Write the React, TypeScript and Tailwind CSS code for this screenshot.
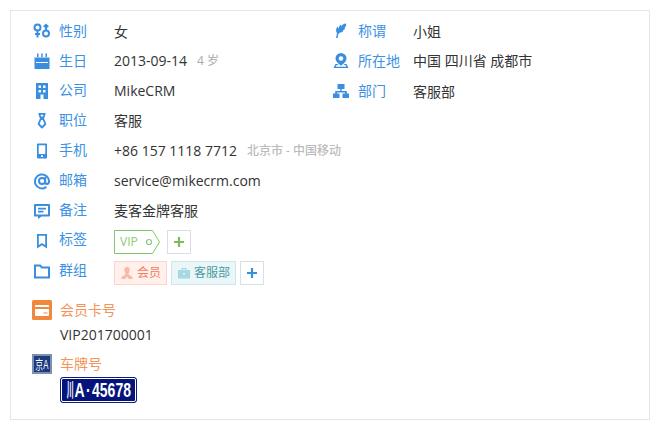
import type { ReactNode } from 'react';

const icons: Record<string, ReactNode> = {
  gender: (
    <>
      <circle cx="4.500" cy="5.500" r="3" fill="none" stroke="currentColor" strokeWidth="2" />
      <path d="M4.500 8v7.500M2 12h5" stroke="currentColor" strokeWidth="2" fill="none" />
      <circle cx="13" cy="11.500" r="3" fill="none" stroke="currentColor" strokeWidth="2" />
      <path d="M13 9V3M10.800 5l2.200-2.200L15.200 5" stroke="currentColor" strokeWidth="2" fill="none" />
    </>
  ),
  cake: (
    <path
      fill="currentColor"
      fillRule="evenodd"
      d="M4 1.500h1.500v3.500H4zM8.200 1.500h1.500v3.500H8.200zM12.500 1.500H14v3.500h-1.500zM1.500 5.500h15V17h-15zM3 10v1h12v-1z"
    />
  ),
  building: (
    <path
      fill="currentColor"
      fillRule="evenodd"
      d="M3 1h12v16H3zM5.500 3.500V6h2.500V3.500zM10 3.500V6h2.500V3.500zM5.500 8v2.500h2.500V8zM10 8v2.500h2.500V8zM7.500 12.500V17h3v-4.500z"
    />
  ),
  tie: (
    <path
      fill="none"
      stroke="currentColor"
      strokeWidth="1.800"
      strokeLinejoin="round"
      d="M6.200 1.800h5.600L10.500 5.500h-3zM7.600 7h2.800l2 5-3.400 3.500L5.600 12z"
    />
  ),
  phone: (
    <path
      fill="currentColor"
      fillRule="evenodd"
      d="M4.800 1.500h8.400A.8.800 0 0 1 14 2.300v13.400a.8.800 0 0 1-.8.800H4.800a.8.800 0 0 1-.8-.8V2.300a.8.800 0 0 1 .8-.8zM5.700 3.300v8.700h6.600V3.300zM8 13.200v1.800h2v-1.800z"
    />
  ),
  at: (
    <path
      fill="none"
      stroke="currentColor"
      strokeWidth="2"
      strokeLinecap="round"
      d="M12.800 15.300a7 7 0 1 1 3.200-6c0 1.700-.8 2.800-2 2.800s-1.800-.9-1.800-2.300V5.800M12.200 9a3.100 3.100 0 1 1-6.200 0 3.100 3.100 0 0 1 6.200 0z"
    />
  ),
  note: (
    <path
      fill="currentColor"
      fillRule="evenodd"
      d="M2 2h14a1 1 0 0 1 1 1v10.500a1 1 0 0 1-1 1H8.500L5 17v-2.500H2a1 1 0 0 1-1-1V3a1 1 0 0 1 1-1zM3 4v8.500h12V4zM5 5.800h8v1.800H5zM5 8.800h5.500v1.800H5z"
    />
  ),
  bookmark: (
    <path
      fill="currentColor"
      fillRule="evenodd"
      d="M4 2h10v14.500l-5-3.200-5 3.200zM5.800 3.800v9.300L9 11l3.200 2.100V3.800z"
    />
  ),
  folder: (
    <path
      fill="currentColor"
      fillRule="evenodd"
      d="M1 2.500h6.500l2 2H17v12H1zM3 4.500v10h12v-8H8.500l-2-2z"
    />
  ),
  feather: (
    <path
      fill="currentColor"
      d="M14 1.500c.6 2.300-.2 3.200-1.200 3.800.6 1.500-.5 2.600-1.700 2.900.1 1.500-1.300 2.300-3.200 2.300l-1.700 1.700-.6 3.800H4l1-4.800C3.500 9 4 5.800 5.700 4.500c.3 1.200.6 1.800 1 2.200-.1-2 1-3.600 2.400-4.300 0 1 .2 1.600.5 2 .2-1.500 2.300-3 4.400-2.900z"
    />
  ),
  pin: (
    <>
      <path
        fill="currentColor"
        fillRule="evenodd"
        d="M9 1a5.500 5.500 0 0 1 5.500 5.500c0 2.700-2.500 5-5.500 7.300-3-2.300-5.500-4.600-5.500-7.300A5.500 5.500 0 0 1 9 1zm0 3.200a2.300 2.300 0 1 0 0 4.600 2.300 2.300 0 0 0 0-4.600z"
      />
      <path fill="currentColor" d="M3.500 12h2l1 1H4.700l-1 1.800h10.600l-1-1.800h-1.800l1-1h2l2 4H1.500z" />
    </>
  ),
  org: (
    <path
      fill="currentColor"
      d="M5.500 2h7v5H9.700v2h5.100v2.500H17V16h-6.500v-4.500h2.600v-1H4.900v1h2.600V16H1v-4.500h2.200V9h5.100V7H5.500z"
    />
  ),
};

function FieldIcon({ name }: { name: string }) {
  return (
    <svg viewBox="0 0 18 18" className="h-[18px] w-[18px] shrink-0 text-[#3a8ee0]">
      {icons[name]}
    </svg>
  );
}

function Field({
  icon,
  label,
  labelClass = 'pb-0.5',
  children,
}: {
  icon: string;
  label: string;
  labelClass?: string;
  children: ReactNode;
}) {
  return (
    <div className="flex h-[30px] items-center">
      <FieldIcon name={icon} />
      <span className={`ml-2 w-[55px] shrink-0 text-[#3b92e3] ${labelClass}`}>{label}</span>
      <div className="flex items-center text-[#333]">{children}</div>
    </div>
  );
}

function AddButton({ color }: { color: string }) {
  return (
    <button className="flex h-6 w-6 items-center justify-center border border-[#d9dfe3] bg-white">
      <svg viewBox="0 0 12 12" className="h-3 w-3">
        <path d="M6 1v10M1 6h10" stroke={color} strokeWidth="2.200" />
      </svg>
    </button>
  );
}

export default function App() {
  return (
    <div className="h-[430px] w-[660px] bg-white p-2.5 font-['Open_Sans','Noto_Sans_CJK_SC',sans-serif] text-sm">
      <div className="h-[410px] border border-[#e6e6e6] pl-[22px] pt-[5px]">
        <div className="grid grid-cols-[299px_1fr]">
          <Field icon="gender" label="性别" labelClass="">
            <span className="pt-0.5">女</span>
          </Field>
          <Field icon="feather" label="称谓" labelClass="">
            <span className="pt-0.5">小姐</span>
          </Field>
          <Field icon="cake" label="生日" labelClass="">
            2013-09-14
            <span className="ml-2.5 text-xs text-[#aaa]">4 岁</span>
          </Field>
          <Field icon="pin" label="所在地" labelClass="">中国 四川省 成都市</Field>
          <Field icon="building" label="公司">MikeCRM</Field>
          <Field icon="org" label="部门" labelClass="">
            <span className="pt-0.5">客服部</span>
          </Field>
        </div>

        <Field icon="tie" label="职位">客服</Field>
        <Field icon="phone" label="手机">
          +86 157 1118 7712
          <span className="ml-2.5 text-xs font-medium text-[#bbb]">北京市 - 中国移动</span>
        </Field>
        <Field icon="at" label="邮箱">service@mikecrm.com</Field>
        <Field icon="note" label="备注">麦客金牌客服</Field>
        <Field icon="bookmark" label="标签" labelClass="pb-1">
          <div className="mt-0.5 flex items-center gap-[7px]">
            <div className="relative h-6 w-[46px]">
              <svg viewBox="0 0 46 24" className="absolute inset-0 h-6 w-[46px]">
                <path d="M.5.500h38l7 11.500-7 11.500H.5z" fill="#fff" stroke="#7dc868" />
                <circle cx="35" cy="12" r="2.500" fill="none" stroke="#8cc97a" strokeWidth="1.200" />
              </svg>
              <span className="absolute left-1.5 top-[3px] text-xs leading-[18px] text-[#8cc97a]">VIP</span>
            </div>
            <AddButton color="#7dbb5c" />
          </div>
        </Field>
        <Field icon="folder" label="群组">
          <div className="mt-1 flex items-center gap-1">
            <span className="flex h-6 items-center gap-[3px] border border-[#fdd5ca] bg-[#fff0ec] pl-[5px] pr-[5px] text-xs text-[#f0805e]">
              <svg viewBox="0 0 14 12" className="h-3 w-3.5">
                <path
                  fill="#fbb8a2"
                  d="M7 0a2.700 2.700 0 0 1 2.700 2.700C9.700 4.500 8.800 6 8.300 6.800c.3 1.200 3.200 2.500 4.200 3.200V12H9L7 9.500 5 12H1.500v-2c1-.7 3.900-2 4.200-3.200C5.200 6 4.300 4.500 4.300 2.700A2.700 2.700 0 0 1 7 0z"
                />
              </svg>
              会员
            </span>
            <span className="flex h-6 items-center gap-[3px] border border-[#cfe7ea] bg-[#eaf6f8] pl-[5px] pr-[5px] text-xs text-[#4d9aa3]">
              <svg viewBox="0 0 14 12" className="h-3 w-3.5">
                <path
                  fill="#a5d8e2"
                  fillRule="evenodd"
                  d="M1 3h3.500V1h5v2H13v8.500H1zM5.500 2v1h3V2zM6 6v1.500h2V6z"
                />
              </svg>
              客服部
            </span>
            <AddButton color="#3a8ee0" />
          </div>
        </Field>

        <div className="-ml-px mt-[14px] flex items-center">
          <svg viewBox="0 0 20 20" className="h-5 w-5">
            <rect width="20" height="20" rx="1.500" fill="#f0883e" />
            <rect x="3" y="5" width="14" height="11" rx="1" fill="#fff" />
            <rect x="3" y="7" width="14" height="2" fill="#f0883e" />
            <rect x="11.500" y="12.500" width="4" height="1" fill="#f0883e" />
          </svg>
          <span className="ml-2 text-[#f5935a]">会员卡号</span>
        </div>
        <div className="-ml-px pl-7 mt-[5px] leading-[20px] text-[#333]">VIP201700001</div>

        <div className="-ml-px mt-[9px] flex items-center">
          <div className="flex h-5 w-5 items-center justify-center overflow-hidden border-2 border-[#7d8faf] bg-[#1c3a80] font-['Liberation_Sans','Noto_Sans_CJK_SC',sans-serif] text-[13px] leading-none whitespace-nowrap text-white">
            <span className="scale-x-[0.6]">京A</span>
          </div>
          <span className="ml-2 text-[#f5935a]">车牌号</span>
        </div>
        <div className="ml-[27px] mt-[3px] flex h-[26px] w-[77px] items-center justify-center overflow-hidden rounded-[3px] border border-[#0c1f78] bg-[#04147a] outline-1 -outline-offset-2 outline-white">
          <span className="flex scale-x-[0.7] items-center font-['Liberation_Sans','Noto_Sans_CJK_SC',sans-serif] text-[20px] font-bold leading-none whitespace-nowrap text-white">
            <span className="inline-block w-[11px] origin-left scale-x-50">川</span>
            <span>A</span>
            <span className="mx-0.5">·</span>
            <span>45678</span>
          </span>
        </div>
      </div>
    </div>
  );
}
